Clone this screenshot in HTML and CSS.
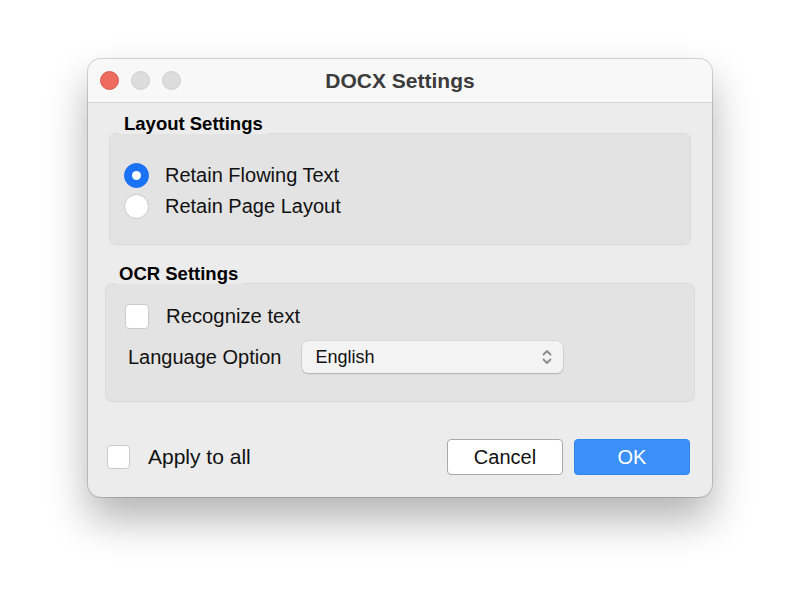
FILE: index.html
```html
<!DOCTYPE html>
<html>
<head>
<meta charset="utf-8">
<link rel="stylesheet" href="styles.css">
</head>
<body>
<div class="stage">
  <div class="window">
    <div class="titlebar">
      <div class="lights">
        <span class="light red"></span>
        <span class="light gray"></span>
        <span class="light gray"></span>
      </div>
      <div class="title">DOCX Settings</div>
    </div>
    <div class="content">
      <section class="group layout-group">
        <div class="group-label">Layout Settings</div>
        <div class="group-box layout-box">
          <div class="radio-row">
            <span class="radio checked"></span>
            <span class="row-text">Retain Flowing Text</span>
          </div>
          <div class="radio-row">
            <span class="radio"></span>
            <span class="row-text">Retain Page Layout</span>
          </div>
        </div>
      </section>
      <section class="group ocr-group">
        <div class="group-label">OCR Settings</div>
        <div class="group-box ocr-box">
          <div class="check-row">
            <span class="checkbox"></span>
            <span class="row-text">Recognize text</span>
          </div>
          <div class="lang-row">
            <span class="lang-label">Language Option</span>
            <div class="popup">
              <span class="popup-text">English</span>
              <svg class="chevrons" width="10" height="20" viewBox="0 0 10 20">
                <path d="M1.5 7.5 L5 4 L8.5 7.5" fill="none" stroke="#8c8c8c" stroke-width="1.8" stroke-linecap="round" stroke-linejoin="round"/>
                <path d="M1.5 12.5 L5 16 L8.5 12.5" fill="none" stroke="#8c8c8c" stroke-width="1.8" stroke-linecap="round" stroke-linejoin="round"/>
              </svg>
            </div>
          </div>
        </div>
      </section>
      <div class="footer">
        <div class="apply">
          <span class="checkbox small"></span>
          <span class="row-text apply-text">Apply to all</span>
        </div>
        <div class="buttons">
          <button class="btn cancel">Cancel</button>
          <button class="btn ok">OK</button>
        </div>
      </div>
    </div>
  </div>
</div>
</body>
</html>
```
FILE: styles.css
```css
* { box-sizing: border-box; }
html, body { margin: 0; padding: 0; background: #ffffff; }
body {
  font-family: "Liberation Sans", Arial, sans-serif;
  color: #111;
}
.stage {
  width: 800px;
  height: 613px;
  padding: 59px 0 0 88px;
}
.window {
  width: 624px;
  height: 438px;
  border-radius: 13px;
  overflow: hidden;
  background: #ececec;
  box-shadow: 0 0 0 1px rgba(0,0,0,0.16), 0 22px 42px rgba(0,0,0,0.30);
  display: flex;
  flex-direction: column;
}
.titlebar {
  height: 44px;
  flex: none;
  background: #f8f8f8;
  border-bottom: 1px solid #d6d6d6;
  display: flex;
  align-items: center;
  position: relative;
}
.lights {
  display: flex;
  gap: 12px;
  padding-left: 12px;
  position: absolute;
  left: 0;
  top: 12px;
}
.light {
  width: 19px;
  height: 19px;
  border-radius: 50%;
  display: block;
}
.light.red { background: #ec6a5e; border: 1px solid #d9594e; }
.light.gray { background: #dcdcdc; border: 1px solid #cfcfcf; }
.title {
  flex: 1;
  text-align: center;
  font-weight: bold;
  font-size: 21px;
  color: #3c3c3c;
  padding-top: 1px;
}
.content {
  flex: 1;
  display: flex;
  flex-direction: column;
}
.group-label {
  position: relative;
  z-index: 1;
  align-self: flex-start;
  background: #ececec;
  font-weight: bold;
  font-size: 18.5px;
  color: #000;
  height: 21px;
  line-height: 22px;
  padding: 0 5px;
  margin-left: 10px;
}
.group { display: flex; flex-direction: column; }
.group-box {
  background: #e3e3e3;
  border: 1px solid #dadada;
  border-radius: 7px;
  margin-top: -1px;
}
.layout-group { margin: 10px 21px 0 21px; }
.layout-box {
  height: 112px;
  padding: 26px 0 0 14px;
}
.radio-row {
  display: flex;
  align-items: center;
  height: 31px;
}
.radio {
  width: 25px;
  height: 25px;
  border-radius: 50%;
  background: #fff;
  border: 1px solid #c9c9c9;
  display: flex;
  align-items: center;
  justify-content: center;
  flex: none;
}
.radio.checked {
  background: #1a73f6;
  border-color: #1a6ff0;
}
.radio.checked::after {
  content: "";
  width: 9px;
  height: 9px;
  border-radius: 50%;
  background: #fff;
}
.row-text {
  font-size: 20px;
  margin-left: 16px;
  color: #111;
}
.ocr-group { margin: 18px 17px 0 17px; }
.ocr-group .group-label { padding: 0 4px; }
.ocr-box {
  height: 119px;
  padding: 20px 0 0 19px;
}
.check-row { display: flex; align-items: center; height: 25px; }
.checkbox {
  width: 24px;
  height: 25px;
  background: #fff;
  border: 1px solid #cbcbcb;
  border-radius: 4px;
  flex: none;
}
.check-row .row-text { margin-left: 17px; font-size: 20.3px; }
.lang-row {
  display: flex;
  align-items: center;
  margin-top: 12px;
  padding-left: 3px;
}
.lang-label { font-size: 20px; color: #111; }
.popup {
  margin-left: 21px;
  width: 261px;
  height: 32px;
  background: #f3f3f3;
  border-radius: 6px;
  box-shadow: 0 0 0 0.5px rgba(0,0,0,0.10), 0 1px 1.5px rgba(0,0,0,0.18);
  display: flex;
  align-items: center;
  justify-content: space-between;
  padding: 0 11px 0 13px;
}
.popup-text { font-size: 18px; color: #111; }
.chevrons { display: block; }
.footer {
  display: flex;
  justify-content: space-between;
  align-items: center;
  margin: 37px 22px 0 19px;
  height: 36px;
}
.apply { display: flex; align-items: center; }
.checkbox.small { width: 23px; height: 24px; }
.apply .apply-text { margin-left: 18px; font-size: 21px; }
.buttons { display: flex; gap: 11px; }
.btn {
  width: 116px;
  height: 36px;
  font-family: "Liberation Sans", Arial, sans-serif;
  font-size: 20px;
  border-radius: 4px;
  padding: 0;
}
.btn.cancel {
  background: #fff;
  border: 1px solid #a9a9a9;
  color: #111;
}
.btn.ok {
  background: #3b91f7;
  border: 1px solid #2f86ee;
  color: #fff;
}
```
